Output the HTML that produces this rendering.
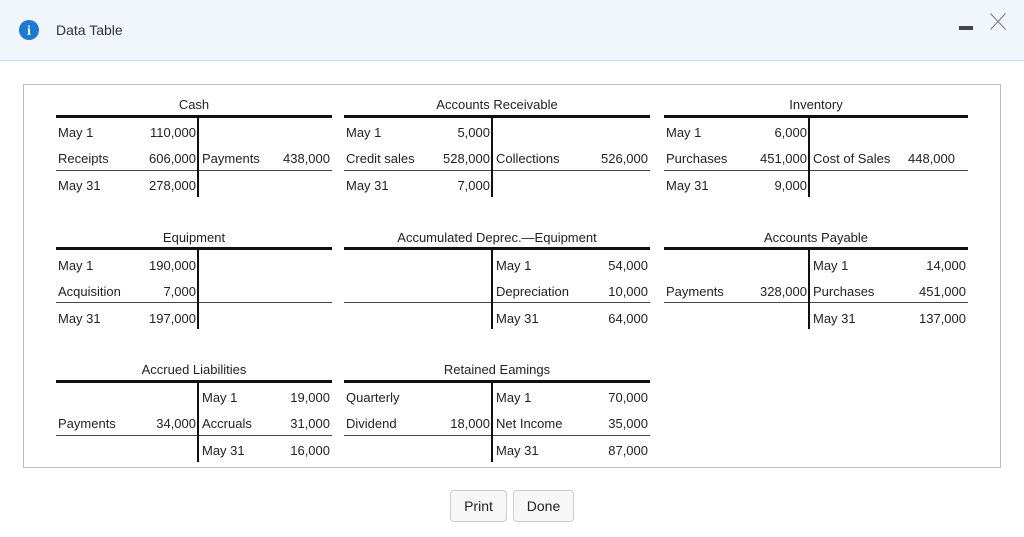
<!DOCTYPE html>
<html><head><meta charset="utf-8"><style>
*{margin:0;padding:0;box-sizing:border-box}
body{width:1024px;height:537px;background:#fff;font-family:"Liberation Sans",Arial,sans-serif;color:#222;position:relative;overflow:hidden;font-size:13px}
.hdr{position:absolute;left:0;top:0;width:1024px;height:61px;background:#f1f6fd;border-bottom:1px solid #c9def2}
.box{position:absolute;left:23px;top:84px;width:978px;height:384px;border:1px solid #bdbdbd}
.a,.r,.c{position:absolute;white-space:nowrap;line-height:16px;margin-top:1px}
.r{text-align:right;width:100px}
.c{text-align:center}
.h3{position:absolute;height:3px;background:#111}
.h1{position:absolute;height:1px;background:#444}
.v{position:absolute;width:2px;background:#111}
.btn{position:absolute;top:490px;height:32px;border:1px solid #ccc;border-radius:4px;background:#f7f7f7;font-size:14px;line-height:30px;text-align:center;color:#222}
</style></head><body>
<div class="hdr"></div>
<svg style="position:absolute;left:18px;top:19px" width="22" height="22" viewBox="0 0 22 22"><circle cx="11" cy="11" r="10" fill="#1a7ad4"/><text x="11" y="16" font-family="Liberation Serif,serif" font-weight="bold" font-size="14" fill="#fff" text-anchor="middle">i</text></svg>
<div class="a" style="left:56px;top:21px;font-size:14px;color:#333">Data Table</div>
<div style="position:absolute;left:959px;top:26px;width:14px;height:4px;background:#444"></div>
<svg style="position:absolute;left:990px;top:13px" width="16" height="17"><path d="M0.5 0.5L15.5 16.5M15.5 0.5L0.5 16.5" stroke="#777" stroke-width="1"/></svg>
<div class="box"></div>

<div class="c" style="left:56px;width:276px;top:96px">Cash</div>
<div class="h3" style="left:56px;width:276px;top:115px"></div>
<div class="h1" style="left:56px;width:276px;top:170px"></div>
<div class="v" style="left:197px;top:117px;height:80px"></div>
<div class="a" style="left:58px;top:124px">May 1</div><div class="r" style="left:96px;top:124px">110,000</div>
<div class="a" style="left:58px;top:150px">Receipts</div><div class="r" style="left:96px;top:150px">606,000</div>
<div class="a" style="left:202px;top:150px">Payments</div><div class="r" style="left:230px;top:150px">438,000</div>
<div class="a" style="left:58px;top:177px">May 31</div><div class="r" style="left:96px;top:177px">278,000</div>

<div class="c" style="left:344px;width:306px;top:96px">Accounts Receivable</div>
<div class="h3" style="left:344px;width:306px;top:115px"></div>
<div class="h1" style="left:344px;width:306px;top:170px"></div>
<div class="v" style="left:491px;top:117px;height:80px"></div>
<div class="a" style="left:346px;top:124px">May 1</div><div class="r" style="left:390px;top:124px">5,000</div>
<div class="a" style="left:346px;top:150px">Credit sales</div><div class="r" style="left:390px;top:150px">528,000</div>
<div class="a" style="left:496px;top:150px">Collections</div><div class="r" style="left:548px;top:150px">526,000</div>
<div class="a" style="left:346px;top:177px">May 31</div><div class="r" style="left:390px;top:177px">7,000</div>

<div class="c" style="left:664px;width:304px;top:96px">Inventory</div>
<div class="h3" style="left:664px;width:304px;top:115px"></div>
<div class="h1" style="left:664px;width:304px;top:170px"></div>
<div class="v" style="left:808px;top:117px;height:80px"></div>
<div class="a" style="left:666px;top:124px">May 1</div><div class="r" style="left:707px;top:124px">6,000</div>
<div class="a" style="left:666px;top:150px">Purchases</div><div class="r" style="left:707px;top:150px">451,000</div>
<div class="a" style="left:813px;top:150px">Cost of Sales</div><div class="r" style="left:855px;top:150px">448,000</div>
<div class="a" style="left:666px;top:177px">May 31</div><div class="r" style="left:707px;top:177px">9,000</div>

<div class="c" style="left:56px;width:276px;top:229px">Equipment</div>
<div class="h3" style="left:56px;width:276px;top:247px"></div>
<div class="h1" style="left:56px;width:276px;top:302px"></div>
<div class="v" style="left:197px;top:249px;height:80px"></div>
<div class="a" style="left:58px;top:257px">May 1</div><div class="r" style="left:96px;top:257px">190,000</div>
<div class="a" style="left:58px;top:283px">Acquisition</div><div class="r" style="left:96px;top:283px">7,000</div>
<div class="a" style="left:58px;top:310px">May 31</div><div class="r" style="left:96px;top:310px">197,000</div>

<div class="c" style="left:344px;width:306px;top:229px">Accumulated Deprec.—Equipment</div>
<div class="h3" style="left:344px;width:306px;top:247px"></div>
<div class="h1" style="left:344px;width:306px;top:302px"></div>
<div class="v" style="left:491px;top:249px;height:80px"></div>
<div class="a" style="left:496px;top:257px">May 1</div><div class="r" style="left:548px;top:257px">54,000</div>
<div class="a" style="left:496px;top:283px">Depreciation</div><div class="r" style="left:548px;top:283px">10,000</div>
<div class="a" style="left:496px;top:310px">May 31</div><div class="r" style="left:548px;top:310px">64,000</div>

<div class="c" style="left:664px;width:304px;top:229px">Accounts Payable</div>
<div class="h3" style="left:664px;width:304px;top:247px"></div>
<div class="h1" style="left:664px;width:304px;top:302px"></div>
<div class="v" style="left:808px;top:249px;height:80px"></div>
<div class="a" style="left:813px;top:257px">May 1</div><div class="r" style="left:866px;top:257px">14,000</div>
<div class="a" style="left:666px;top:283px">Payments</div><div class="r" style="left:707px;top:283px">328,000</div>
<div class="a" style="left:813px;top:283px">Purchases</div><div class="r" style="left:866px;top:283px">451,000</div>
<div class="a" style="left:813px;top:310px">May 31</div><div class="r" style="left:866px;top:310px">137,000</div>

<div class="c" style="left:56px;width:276px;top:361px">Accrued Liabilities</div>
<div class="h3" style="left:56px;width:276px;top:380px"></div>
<div class="h1" style="left:56px;width:276px;top:435px"></div>
<div class="v" style="left:197px;top:382px;height:80px"></div>
<div class="a" style="left:202px;top:389px">May 1</div><div class="r" style="left:230px;top:389px">19,000</div>
<div class="a" style="left:58px;top:415px">Payments</div><div class="r" style="left:96px;top:415px">34,000</div>
<div class="a" style="left:202px;top:415px">Accruals</div><div class="r" style="left:230px;top:415px">31,000</div>
<div class="a" style="left:202px;top:442px">May 31</div><div class="r" style="left:230px;top:442px">16,000</div>

<div class="c" style="left:344px;width:306px;top:361px">Retained Eamings</div>
<div class="h3" style="left:344px;width:306px;top:380px"></div>
<div class="h1" style="left:344px;width:306px;top:435px"></div>
<div class="v" style="left:491px;top:382px;height:80px"></div>
<div class="a" style="left:346px;top:389px">Quarterly</div>
<div class="a" style="left:496px;top:389px">May 1</div><div class="r" style="left:548px;top:389px">70,000</div>
<div class="a" style="left:346px;top:415px">Dividend</div><div class="r" style="left:390px;top:415px">18,000</div>
<div class="a" style="left:496px;top:415px">Net Income</div><div class="r" style="left:548px;top:415px">35,000</div>
<div class="a" style="left:496px;top:442px">May 31</div><div class="r" style="left:548px;top:442px">87,000</div>

<div class="btn" style="left:450px;width:57px">Print</div>
<div class="btn" style="left:513px;width:61px">Done</div>
</body></html>
